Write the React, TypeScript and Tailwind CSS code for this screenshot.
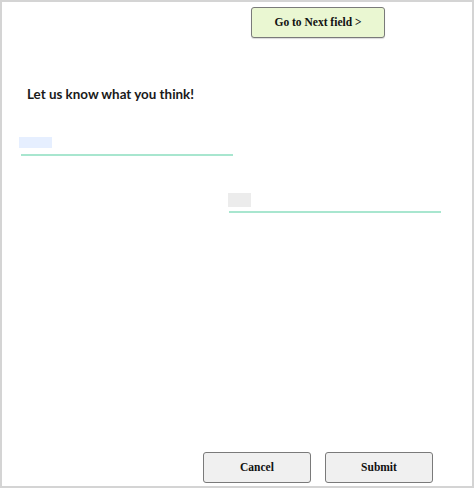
export default function App() {
  return (
    <div className="w-[474px] h-[488px] border-2 border-[#d4d4d4] bg-white flex flex-col">
      <button className="ml-[249px] mt-[5px] w-[134px] h-[31px] rounded-[3px] border border-[#7a7a7a] bg-[#eaf7d2] text-[11.5px] font-bold text-[#111] font-['Liberation_Serif',serif] shadow-[0_1px_1px_rgba(0,0,0,0.15)]">
        Go to Next field &gt;
      </button>

      <h1 className="ml-[25px] mt-[46px] text-[13.4px] leading-[20px] font-bold text-[#1a1a1a] font-['Lato',sans-serif]">
        Let us know what you think!
      </h1>

      <div className="ml-[17px] mt-[33px] w-[33px] h-[11px] bg-[#e6efff]" />
      <div className="ml-[19px] mt-[6px] w-[212px] h-[2px] bg-[#a8e6cf]" />

      <div className="ml-[226px] mt-[37px] w-[23px] h-[14px] bg-[#ececec]" />
      <div className="ml-[227px] mt-[4px] w-[212px] h-[2px] bg-[#a8e6cf]" />

      <div className="mt-auto mb-[3px] ml-[201px] flex gap-[14px]">
        <button className="w-[108px] h-[31px] rounded-[3px] border border-[#7a7a7a] bg-[#f0f0f0] text-[11.5px] font-bold text-[#111] font-['Liberation_Serif',serif]">
          Cancel
        </button>
        <button className="w-[108px] h-[31px] rounded-[3px] border border-[#7a7a7a] bg-[#f0f0f0] text-[11.5px] font-bold text-[#111] font-['Liberation_Serif',serif]">
          Submit
        </button>
      </div>
    </div>
  );
}
